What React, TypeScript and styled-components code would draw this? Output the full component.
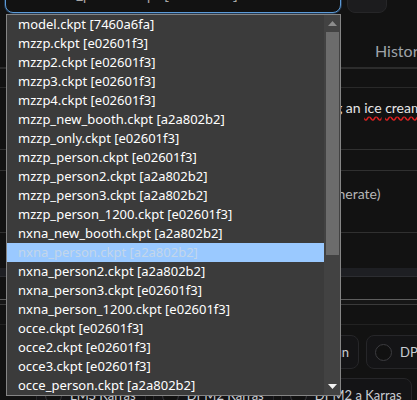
import React from 'react';
import styled, { createGlobalStyle } from 'styled-components';

const models = [
  'model.ckpt [7460a6fa]',
  'mzzp.ckpt [e02601f3]',
  'mzzp2.ckpt [e02601f3]',
  'mzzp3.ckpt [e02601f3]',
  'mzzp4.ckpt [e02601f3]',
  'mzzp_new_booth.ckpt [a2a802b2]',
  'mzzp_only.ckpt [e02601f3]',
  'mzzp_person.ckpt [e02601f3]',
  'mzzp_person2.ckpt [a2a802b2]',
  'mzzp_person3.ckpt [a2a802b2]',
  'mzzp_person_1200.ckpt [e02601f3]',
  'nxna_new_booth.ckpt [a2a802b2]',
  'nxna_person.ckpt [a2a802b2]',
  'nxna_person2.ckpt [a2a802b2]',
  'nxna_person3.ckpt [e02601f3]',
  'nxna_person_1200.ckpt [e02601f3]',
  'occe.ckpt [e02601f3]',
  'occe2.ckpt [e02601f3]',
  'occe3.ckpt [e02601f3]',
  'occe_person.ckpt [a2a802b2]',
];

const selected = 'nxna_person.ckpt [a2a802b2]';

export default function App(): JSX.Element {
  return (
    <>
      <GlobalStyle />
      <Page>
        <TopRow>
          <SelectBox>
            <SelectValue>{selected}</SelectValue>
          </SelectBox>
          <IconButton>
            <svg width="14" height="14" viewBox="0 0 14 14">
              <path d="M3 0 L11 0 L7 4 Z" fill="#8a8a8a" />
            </svg>
          </IconButton>
        </TopRow>

        <TabsRow>
          <Tab>History</Tab>
        </TabsRow>

        <Divider />
        <PromptRow>
          <PromptText>
            g an <Misspelled>ice</Misspelled> <Misspelled>cream</Misspelled> cone
          </PromptText>
        </PromptRow>
        <EmptyRow $height={20} />
        <HintRow>
          <HintText>generate)</HintText>
        </HintRow>
        <EmptyRow $height={34} $noBorder />
        <Band />
        <EmptyRow $height={21} $noBorder />
        <SliderTrack />
        <EmptyRow $height={19} $faint />

        <RadioRow $padLeft={284} $top={10}>
          <RadioBox>
            <Radio />
            <RadioLabel>Heun</RadioLabel>
          </RadioBox>
          <RadioBox>
            <Radio />
            <RadioLabel>DPM2</RadioLabel>
          </RadioBox>
        </RadioRow>
        <RadioRow $padLeft={36} $top={9}>
          <RadioBox>
            <Radio />
            <RadioLabel>LMS Karras</RadioLabel>
          </RadioBox>
          <RadioBox>
            <Radio />
            <RadioLabel>DPM2 Karras</RadioLabel>
          </RadioBox>
          <RadioBox>
            <Radio />
            <RadioLabel>DPM2 a Karras</RadioLabel>
          </RadioBox>
          <RadioBox>
            <Radio />
            <RadioLabel>DDIM</RadioLabel>
          </RadioBox>
        </RadioRow>

        <Dropdown>
          <OptionList>
            {models.map((m) => (
              <Option key={m} $active={m === selected}>
                {m}
              </Option>
            ))}
          </OptionList>
          <Scrollbar>
            <ArrowButton>
              <svg width="9" height="6" viewBox="0 0 9 6">
                <path d="M0 5 L4.5 0 L9 5 Z" fill="#8c8c8c" />
              </svg>
            </ArrowButton>
            <Thumb />
            <TrackRest />
            <ArrowButton>
              <svg width="9" height="6" viewBox="0 0 9 6">
                <path d="M0 0 L9 0 L4.5 5 Z" fill="#f2f2f2" />
              </svg>
            </ArrowButton>
          </Scrollbar>
        </Dropdown>
      </Page>
    </>
  );
}

const GlobalStyle = createGlobalStyle`
  html, body {
    margin: 0;
    padding: 0;
    background: #121212;
    overflow: hidden;
  }
  body {
    font-family: Lato, 'Noto Sans', sans-serif;
  }
`;

const Page = styled.div`
  position: relative;
  width: 417px;
  height: 400px;
  overflow: hidden;
  background: #121212;
  display: flex;
  flex-direction: column;
`;

const TopRow = styled.div`
  display: flex;
  align-items: flex-end;
  height: 13px;
  flex-shrink: 0;
`;

const SelectBox = styled.div`
  box-sizing: border-box;
  flex-shrink: 0;
  width: 336px;
  height: 40px;
  margin-left: 5px;
  padding: 0 0 0 38px;
  display: flex;
  align-items: center;
  background: #121212;
  border: 1px solid #5c9ad6;
  box-shadow: 0 0 0 1px rgba(70, 130, 200, 0.35);
  border-radius: 8px;
`;

const SelectValue = styled.span`
  color: #a8a8a8;
  font-family: 'Noto Sans', sans-serif;
  font-size: 14px;
`;

const IconButton = styled.div`
  box-sizing: border-box;
  flex-shrink: 0;
  width: 40px;
  height: 40px;
  margin-left: 6px;
  display: flex;
  justify-content: center;
  align-items: flex-end;
  padding-bottom: 10px;
  background: #1c1c1e;
  border: 1px solid #262628;
  border-radius: 8px;
`;

const TabsRow = styled.div`
  box-sizing: border-box;
  height: 56px;
  flex-shrink: 0;
  display: flex;
  align-items: flex-end;
  padding: 0 0 7px 375px;
  border-bottom: 2px solid #2c2c2c;
`;

const Tab = styled.span`
  color: #9ea2a8;
  font-size: 16px;
  white-space: nowrap;
`;

const Divider = styled.div`
  flex-shrink: 0;
  margin-top: 18px;
  height: 1px;
  background: #292929;
`;

const PromptRow = styled.div`
  box-sizing: border-box;
  flex-shrink: 0;
  height: 62px;
  padding: 9px 0 0 335px;
  border-bottom: 1px solid #303030;
  white-space: nowrap;
`;

const PromptText = styled.span`
  color: #e6e6e6;
  font-size: 14px;
`;

const Misspelled = styled.span`
  text-decoration: underline wavy #e02020;
  text-decoration-skip-ink: none;
  text-underline-offset: 3px;
`;

const EmptyRow = styled.div<{ $height: number; $noBorder?: boolean; $faint?: boolean }>`
  box-sizing: border-box;
  flex-shrink: 0;
  height: ${(p) => p.$height + 1}px;
  border-bottom: 1px solid
    ${(p) => (p.$noBorder ? 'transparent' : p.$faint ? '#222' : '#303030')};
`;

const HintRow = styled.div`
  box-sizing: border-box;
  flex-shrink: 0;
  height: 62px;
  padding: 12px 0 0 323px;
  border-bottom: 1px solid #303030;
  white-space: nowrap;
`;

const HintText = styled.span`
  color: #b5b5b5;
  font-size: 14px;
`;

const Band = styled.div`
  flex-shrink: 0;
  height: 8px;
  background: #1e1f23;
  border-bottom: 1px solid #2c2d31;
`;

const SliderTrack = styled.div`
  flex-shrink: 0;
  height: 4px;
  background: #161616;
  border-top: 1px solid #5e5e5e;
  border-bottom: 1px solid #3a3a3a;
`;

const RadioRow = styled.div<{ $padLeft: number; $top: number }>`
  flex-shrink: 0;
  display: flex;
  gap: 7px;
  margin-top: ${(p) => p.$top}px;
  padding-left: ${(p) => p.$padLeft}px;
`;

const RadioBox = styled.div`
  box-sizing: border-box;
  flex-shrink: 0;
  height: 34px;
  display: flex;
  align-items: center;
  gap: 8px;
  padding: 0 9px 0 8px;
  border: 1px solid #262629;
  border-radius: 8px;
  background: #141416;
`;

const Radio = styled.span`
  box-sizing: border-box;
  width: 17px;
  height: 17px;
  border-radius: 50%;
  border: 1px solid #3c3c40;
  background: #111;
`;

const RadioLabel = styled.span`
  color: #c9ccd2;
  font-size: 13px;
  white-space: nowrap;
`;

const Dropdown = styled.div`
  position: absolute;
  top: 14px;
  left: 6px;
  box-sizing: border-box;
  width: 335px;
  height: 382px;
  display: flex;
  background: #3b3b3b;
  border: 1px solid #858585;
  font-family: 'Noto Sans', sans-serif;
`;

const OptionList = styled.div`
  flex: 1;
  display: flex;
  flex-direction: column;
  overflow: hidden;
`;

const Option = styled.div<{ $active?: boolean }>`
  flex-shrink: 0;
  height: 19px;
  line-height: 19px;
  padding-left: 11px;
  font-size: 13px;
  white-space: nowrap;
  color: ${(p) => (p.$active ? '#c3d6ea' : '#ffffff')};
  background: ${(p) => (p.$active ? '#9ac9ff' : 'transparent')};
`;

const Scrollbar = styled.div`
  width: 16px;
  flex-shrink: 0;
  display: flex;
  flex-direction: column;
  background: #424242;
`;

const ArrowButton = styled.div`
  height: 17px;
  flex-shrink: 0;
  display: flex;
  justify-content: center;
  align-items: center;
`;

const Thumb = styled.div`
  height: 223px;
  flex-shrink: 0;
  margin: 0 1px 0 2px;
  background: #6c6c6c;
`;

const TrackRest = styled.div`
  flex: 1;
`;
